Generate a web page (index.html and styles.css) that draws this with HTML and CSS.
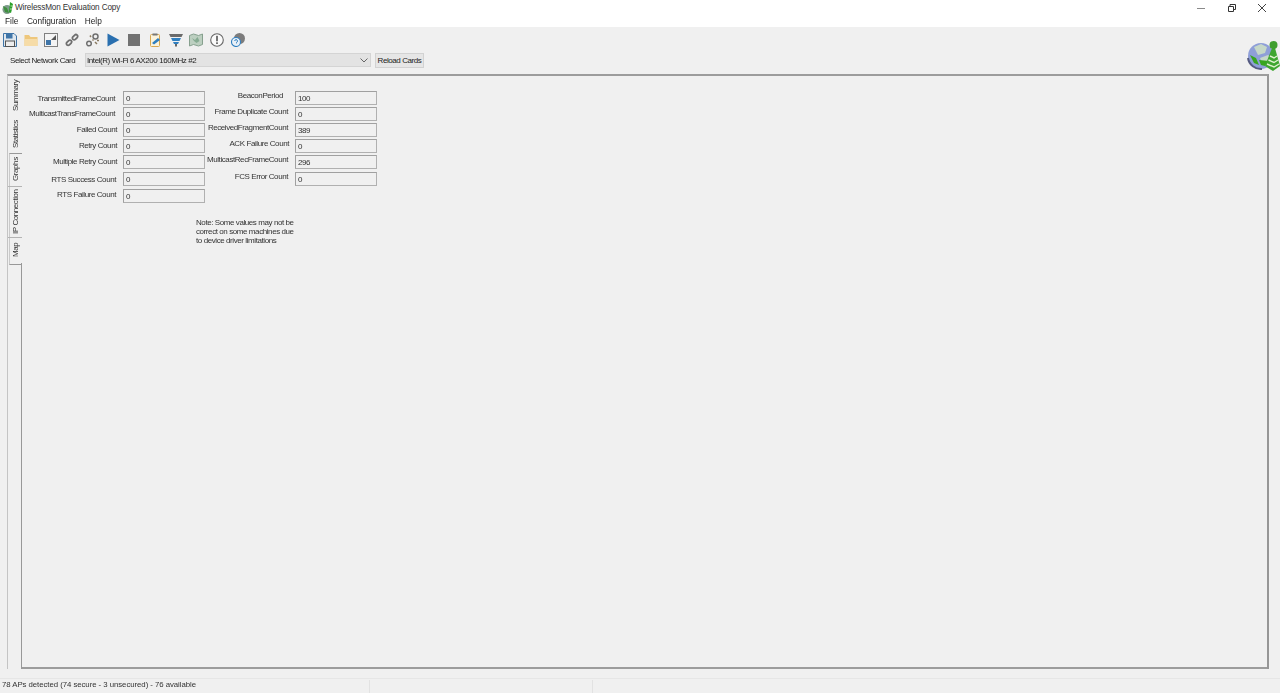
FILE: index.html
```
<!DOCTYPE html>
<html lang="en">
<head>
<meta charset="utf-8">
<title>WirelessMon Evaluation Copy</title>
<link rel="stylesheet" href="styles.css">
</head>
<body>
<div class="app">
  <header class="chrome">
    <div class="titlebar">
      <svg class="appicon" viewBox="0 0 12 12" width="12" height="12"><circle cx="5" cy="7.500" r="4.500" fill="#7f9a8c"/><path d="M1 4l4 2 2 5-4-1z" fill="#3f8f3f"/><path d="M8 0l3 2-2 9-2-1z" fill="#2aa02a"/><path d="M8.500 4h2M8 7h2" stroke="#d8efc8" stroke-width=".8"/></svg>
      <span class="title">WirelessMon Evaluation Copy</span>
      <div class="winbtns">
        <svg viewBox="0 0 10 10" width="10" height="10"><path d="M0 5.500h8" stroke="#8a8a8a" fill="none"/></svg>
        <svg viewBox="0 0 10 10" width="10" height="10"><path d="M1.500 3.500h5v5h-5zM3 3.500V1.500h5.500v5h-2" stroke="#333" fill="none"/></svg>
        <svg viewBox="0 0 10 10" width="10" height="10"><path d="M1 1l8 8M9 1l-8 8" stroke="#444" fill="none"/></svg>
      </div>
    </div>
    <nav class="menubar"><span>File</span><span>Configuration</span><span>Help</span></nav>
  </header>

  <div class="toolbar">
    <svg class="tool" viewBox="0 0 14 14"><path d="M.500.500h10.500l2.500 2.500v10.500H.500z" fill="#dfe7ee" stroke="#3f75a8"/><rect x="3" y="1" width="6.500" height="4.500" fill="#3f75a8"/><rect x="2.500" y="8" width="9" height="5.500" fill="#eee" stroke="#555"/></svg>
    <svg class="tool" viewBox="0 0 14 14"><path d="M.500 2h4.500l1.500 2h7v9H.500z" fill="#eec77c"/><path d="M.500 6h13v7H.500z" fill="#f6dca8"/></svg>
    <svg class="tool" viewBox="0 0 14 14"><rect x=".500" y=".500" width="13" height="13" fill="#f4f4f4" stroke="#808080"/><rect x="2" y="7" width="5" height="5" fill="#3f75a8"/><path d="M7 7l5-5v5z" fill="#555"/></svg>
    <svg class="tool" viewBox="0 0 14 14"><g fill="none" stroke="#6f6f6f" stroke-width="1.800"><rect x="1" y="8" width="6" height="3.500" rx="1.700" transform="rotate(-45 4 9.700)"/><rect x="7" y="2.500" width="6" height="3.500" rx="1.700" transform="rotate(-45 10 4.200)"/></g></svg>
    <svg class="tool" viewBox="0 0 14 14"><g fill="none" stroke="#6f6f6f" stroke-width="1.500"><circle cx="9.500" cy="3.500" r="2.500"/><circle cx="3" cy="10.500" r="2.300"/><path d="M6.500 7.500l1-1M5 4L4 2.500M9 9l2 2M11 7.500h2" stroke="#8a7a60"/></g></svg>
    <svg class="tool" viewBox="0 0 14 14"><path d="M1.500.500L13.500 7 1.500 13.500z" fill="#2a70b0"/></svg>
    <svg class="tool" viewBox="0 0 14 14"><rect x="1" y="1" width="12" height="12" fill="#727272"/></svg>
    <svg class="tool" viewBox="0 0 14 14"><rect x="2.500" y="1.500" width="9" height="12" rx="1" fill="#fbf3dc" stroke="#d9a850"/><rect x="4.500" y=".500" width="5" height="2" fill="#777"/><path d="M4 10l6-5 2 2-6 4.500z" fill="#2f7fc0"/></svg>
    <svg class="tool" viewBox="0 0 14 14"><path d="M0 1h14l-1.500 3h-11z" fill="#6a6a6a"/><path d="M2 5h10l-1.500 3h-7z" fill="#2f7fc0"/><path d="M4 9h6l-1 2H5z" fill="#2f7fc0"/><rect x="6" y="11" width="2" height="2.500" fill="#666"/></svg>
    <svg class="tool" viewBox="0 0 14 14"><path d="M.500 2.500l4-1.500 5 1.500 4-1.500v10.500l-4 1.500-5-1.500-4 1.500z" fill="#bccfc0" stroke="#86a08e"/><path d="M3 5l3 2 2.500-3 2 4-3 2-2.500-2z" fill="#86ab92"/></svg>
    <svg class="tool" viewBox="0 0 14 14"><circle cx="7" cy="7" r="6.300" fill="#fafafa" stroke="#666" stroke-width="1.100"/><rect x="6.200" y="2.800" width="1.600" height="5.500" fill="#555"/><rect x="6.200" y="9.300" width="1.600" height="1.700" fill="#555"/></svg>
    <svg class="tool" viewBox="0 0 14 14"><circle cx="8.500" cy="5.500" r="5.500" fill="#7c7c7c"/><circle cx="5" cy="9" r="4.500" fill="#e8f0f8" stroke="#2f7fc0" stroke-width="1.100"/><path d="M3.700 8a1.400 1.400 0 1 1 1.800 1.400v1" fill="none" stroke="#2f7fc0"/></svg>
  </div>

  <div class="cardrow">
    <span class="cardlabel">Select Network Card</span>
    <div class="combo"><span>Intel(R) Wi-Fi 6 AX200 160MHz #2</span>
      <svg viewBox="0 0 8 5" width="8" height="5"><path d="M.500.500L4 4 7.500.500" fill="none" stroke="#666"/></svg>
    </div>
    <button class="reload" type="button">Reload Cards</button>
    <svg class="globe" viewBox="0 0 34 32" width="34" height="32">
      <circle cx="14" cy="16" r="13" fill="#8f9fd8"/>
      <path d="M7 7l7-3 6 3-2 6-7 2zM13 18l8-3 5 4-4 7-6-1z" fill="#c6d8c8"/>
      <path d="M3 15l6 3 3 7-5-2zM12 20l10 1-4 5-4-1z" fill="#37a51f"/>
      <path d="M1 18a13 13 0 0 0 14 11" stroke="#555a80" stroke-width="2" fill="none"/>
      <path d="M25 8h3l5 18-7 5-8-5z" fill="#3fa630"/>
      <path d="M20 24l7 3 5-3M21.500 20l5.500 2.500 4-2.500M23 16l4 2 3-2" stroke="#dff2cf" stroke-width="1.400" fill="none"/>
      <circle cx="26.500" cy="5" r="4" fill="#3f9e2e"/>
    </svg>
  </div>

  <main class="panel">
    <aside class="tabs">
      <span class="tab t1">Summary</span>
      <span class="tab t2">Statistics</span>
      <span class="tab t3">Graphs</span>
      <span class="tab t4">IP Connection</span>
      <span class="tab t5">Map</span>
    </aside>
    <section class="page">
      <div class="fields">
        <div class="col">
          <div class="row"><label class="lab l-2">TransmittedFrameCount</label><span class="val">0</span></div>
          <div class="row"><label class="lab l-1">MulticastTransFrameCount</label><span class="val">0</span></div>
          <div class="row"><label class="lab">Failed Count</label><span class="val">0</span></div>
          <div class="row"><label class="lab">Retry Count</label><span class="val">0</span></div>
          <div class="row"><label class="lab">Multiple Retry Count</label><span class="val">0</span></div>
          <div class="row r5"><label class="lab rts down">RTS Success Count</label><span class="val">0</span></div>
          <div class="row r6"><label class="lab rts up1">RTS Failure Count</label><span class="val">0</span></div>
        </div>
        <div class="col">
          <div class="row"><label class="lab r up shift">BeaconPeriod</label><span class="val">100</span></div>
          <div class="row"><label class="lab r up">Frame Duplicate Count</label><span class="val">0</span></div>
          <div class="row"><label class="lab r up">ReceivedFragmentCount</label><span class="val">389</span></div>
          <div class="row"><label class="lab r up ack">ACK Failure Count</label><span class="val">0</span></div>
          <div class="row"><label class="lab r up">MulticastRecFrameCount</label><span class="val">296</span></div>
          <div class="row r5"><label class="lab r up">FCS Error Count</label><span class="val">0</span></div>
        </div>
      </div>
      <p class="note">Note: Some values may not be<br>correct on some machines due<br>to device driver limitations</p>
    </section>
  </main>

  <footer class="status">
    <span class="s1">78 APs detected (74 secure - 3 unsecured) - 76 available</span>
    <span class="s2"></span>
    <span class="s3"></span>
  </footer>
</div>
</body>
</html>
```
FILE: styles.css
```
* { box-sizing: border-box; }
html, body { margin: 0; padding: 0; height: 100%; overflow: hidden; }
body { background: #f0f0f0; color: #222; font-family: "Liberation Sans", Arial, sans-serif; font-size: 8px; letter-spacing: -.42px; }
.app { width: 1280px; height: 693px; display: flex; flex-direction: column; filter: blur(.3px); }

.chrome { background: #fff; height: 27px; flex: none; }
.titlebar { height: 15px; display: flex; align-items: center; padding-left: 2px; }
.appicon { margin-right: 1px; }
.title { font-size: 8.200px; letter-spacing: -.15px; color: #333; }
.winbtns { margin-left: auto; display: flex; gap: 20px; padding-right: 13px; align-items: center; }
.menubar { display: flex; gap: 8.500px; padding-left: 5px; height: 12px; align-items: center; font-size: 8.300px; letter-spacing: 0; color: #222; }

.toolbar { height: 21px; flex: none; display: flex; align-items: center; gap: 6.700px; padding: 4px 0 0 3px; }
.tool { width: 14px; height: 14px; flex: none; }

.cardrow { height: 26px; flex: none; display: flex; align-items: center; padding: 2px 0 4px 10px; position: relative; }
.cardlabel { width: 75px; flex: none; white-space: nowrap; }
.combo { width: 286px; height: 14px; background: #e3e3e3; border: 1px solid #d4d4d4; display: flex; align-items: center; justify-content: space-between; padding: 0 2px 0 1px; flex: none; }
.reload { margin-left: 4px; width: 49px; height: 15px; padding: 0; background: #e6e6e6; border: 1px solid #d2d2d2; font: inherit; letter-spacing: inherit; white-space: nowrap; color: #222; }
.globe { position: absolute; right: -1px; top: -8px; }

.panel { flex: 1; min-height: 0; margin: 0 11px 9px 7px; display: flex; border-top: 2px solid #9c9c9c; border-left: 1px solid #c4c4c4; border-right: 2px solid #969696; }
.tabs { width: 14px; flex: none; position: relative; display: flex; flex-direction: column; }
.tab { writing-mode: vertical-rl; transform: rotate(180deg); white-space: nowrap; display: flex; align-items: center; justify-content: center; color: #333; flex: none; width: 14px; }
.t1 { height: 39px; }
.t2 { height: 38px; }
.t3 { height: 34px; border-top: 1px solid #b4b4b4; }
.t4 { height: 51px; border-top: 1px solid #b4b4b4; }
.t5 { height: 24px; }
.tabs::before { content: ""; position: absolute; left: 1px; right: 0; top: 77px; height: 110px; border-left: 1px solid #cacaca; border-top: 1px solid #989898; border-bottom: 1px solid #989898; }
.tabs::after { content: ""; position: absolute; left: 13px; width: 1px; top: 187px; bottom: 0; background: #989898; }

.page { flex: 1; padding: 15px 0 0 0; position: relative; border-bottom: 2px solid #9c9c9c; }
.fields { display: flex; }
.col { display: flex; flex-direction: column; gap: 2px; }
.row { display: flex; align-items: center; height: 14px; }
.row.r5, .row.r6 { margin-top: 1px; }
.lab { width: 101px; text-align: right; white-space: nowrap; color: #333; padding-right: 6px; line-height: 12px; }
.lab.l-2 { padding-right: 8px; transform: translateY(1px); }
.lab.l-1 { padding-right: 8px; }
.lab.rts { padding-right: 7px; }
.lab.down { transform: translateY(1px); }
.lab.up1 { transform: translateY(-1px); }
.lab.up { transform: translateY(-2px); }
.lab.r { width: 90px; padding-right: 7px; }
.lab.ack { padding-right: 6px; }
.lab.shift { padding-right: 12px; }
.val { width: 82px; height: 14px; border: 1px solid #b0b0b0; border-top-color: #a0a0a0; border-left-color: #a0a0a0; background: #f0f0f0; padding-left: 2px; line-height: 13px; color: #333; }
.note { margin: 15px 0 0 174px; line-height: 9px; color: #333; }

.status { height: 15px; flex: none; border-top: 1px solid #e6e6e6; display: flex; align-items: center; font-size: 7.800px; letter-spacing: -.05px; padding-top: 1px; color: #333; }
.s1 { width: 370px; flex: none; padding-left: 2px; height: 100%; border-right: 1px solid #e2e2e2; }
.s2 { width: 223px; flex: none; height: 100%; border-right: 1px solid #e2e2e2; }
.s3 { flex: 1; }
```
